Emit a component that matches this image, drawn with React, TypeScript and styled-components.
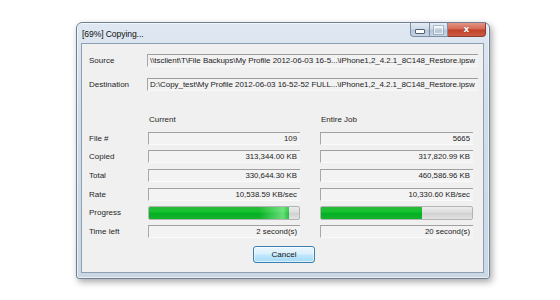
import React from "react";
import styled, { createGlobalStyle } from "styled-components";

const Global = createGlobalStyle`
  html, body { margin: 0; padding: 0; background: #ffffff; }
  body { font-family: "Liberation Sans", Arial, sans-serif; }
  #root { width: 560px; height: 300px; overflow: hidden; }
`;

const Page = styled.div`
  width: 560px;
  height: 300px;
  padding: 22px 0 0 76px;
  box-sizing: border-box;
`;

const Window = styled.div`
  width: 414px;
  height: 257px;
  box-sizing: border-box;
  border: 1px solid #6f8095;
  border-radius: 6px 6px 3px 3px;
  background: linear-gradient(180deg, #dfe8f2 0%, #d2deea 30%, #cbd7e4 100%);
  box-shadow: 2px 3px 7px rgba(0, 0, 0, 0.35), inset 0 0 0 1px rgba(255, 255, 255, 0.6);
  display: flex;
  flex-direction: column;
  padding: 0 5px 5px 4px;
`;

const TitleBar = styled.div`
  height: 20px;
  display: flex;
  align-items: flex-start;
`;

const Title = styled.div`
  font-size: 8.6px;
  color: #101010;
  padding: 6px 0 0 1px;
  letter-spacing: -0.1px;
`;

const Buttons = styled.div`
  margin-left: auto;
  display: flex;
  margin-top: 0px;
  margin-right: -2px;
`;

const CapBtn = styled.div<{ $w: number; $close?: boolean; $first?: boolean; $last?: boolean }>`
  width: ${(p) => p.$w}px;
  height: 14px;
  box-sizing: border-box;
  border: 1px solid ${(p) => (p.$close ? "#8b3b32" : "#7d8ea3")};
  border-left-width: ${(p) => (p.$first ? 1 : 0)}px;
  border-top: none;
  border-radius: ${(p) => (p.$first ? "0 0 0 4px" : p.$last ? "0 0 4px 0" : "0")};
  background: ${(p) =>
    p.$close
      ? "linear-gradient(180deg, #e39484 0%, #d46a55 45%, #c1402a 55%, #cc5c42 100%)"
      : "linear-gradient(180deg, #e4ecf5 0%, #cfdbe8 45%, #b6c6d8 55%, #c8d6e6 100%)"};
  display: flex;
  align-items: center;
  justify-content: center;
`;

const MinGlyph = styled.div`
  width: 8px;
  height: 3px;
  margin-top: 3px;
  background: #ffffff;
  border: 1px solid #4f6277;
  border-radius: 1px;
`;

const MaxGlyph = styled.div`
  width: 7px;
  height: 5px;
  border: 1px solid #ffffff;
  border-top-width: 2px;
  box-shadow: 0 0 0 1px rgba(79, 98, 119, 0.45);
  opacity: 0.7;
`;

const CloseGlyph = styled.div`
  color: #ffffff;
  font-family: "DejaVu Sans", sans-serif;
  font-weight: bold;
  font-size: 9px;
  line-height: 9px;
  text-shadow: 0 0 1px #6a2018;
`;

const Client = styled.div`
  flex: 1;
  background: #f0f0f0;
  border: 1px solid #8e9fb2;
  display: flex;
  flex-direction: column;
  padding: 9px 7px 9px 7px;
  box-sizing: border-box;
  font-size: 8px;
  color: #222;
`;

const PathRow = styled.div`
  display: grid;
  grid-template-columns: 58px 331px;
  align-items: center;
  height: 14px;
  margin-bottom: 10px;
`;

const Label = styled.div`
  font-size: 8px;
  color: #262626;
  white-space: nowrap;
`;

const PathField = styled.div`
  height: 13px;
  box-sizing: border-box;
  border-top: 1px solid #9d9d9d;
  border-left: 1px solid #a6a6a6;
  border-bottom: 1px solid #f8f8f8;
  background: #f2f2f2;
  font-size: 8px;
  letter-spacing: -0.05px;
  line-height: 11px;
  padding-left: 2px;
  white-space: nowrap;
  overflow: hidden;
  color: #1c1c1c;
`;

const Grid = styled.div`
  margin-top: 9px;
  display: grid;
  grid-template-columns: 59px 152px 20px 153px;
  grid-auto-rows: 18.7px;
  align-items: center;
`;

const Head = styled.div<{ $col: number }>`
  grid-column: ${(p) => p.$col};
  font-size: 8px;
  color: #262626;
  padding-left: 1px;
`;

const Field = styled.div<{ $col: number }>`
  grid-column: ${(p) => p.$col};
  height: 13px;
  box-sizing: border-box;
  border-top: 1px solid #a0a0a0;
  border-left: 1px solid #a8a8a8;
  border-bottom: 1px solid #fafafa;
  background: #f3f3f3;
  font-size: 7.8px;
  line-height: 11px;
  text-align: right;
  padding-right: 3px;
  color: #1c1c1c;
  white-space: nowrap;
`;

const Bar = styled.div<{ $col: number }>`
  grid-column: ${(p) => p.$col};
  height: 14px;
  box-sizing: border-box;
  border: 1px solid #b4b4b4;
  border-radius: 2px;
  background: linear-gradient(180deg, #ececec 0%, #dadada 50%, #d0d0d0 51%, #e2e2e2 100%);
  overflow: hidden;
  position: relative;
`;

const Fill = styled.div<{ $glow?: boolean }>`
  height: 100%;
  background: linear-gradient(180deg, #2bb83b 0%, #16c32f 35%, #06b025 55%, #15b32c 100%);
  position: relative;
  &::after {
    content: "";
    display: ${(p) => (p.$glow ? "block" : "none")};
    position: absolute;
    top: 0;
    bottom: 0;
    right: 0;
    width: 30px;
    background: linear-gradient(90deg, rgba(180, 255, 190, 0) 0%, rgba(180, 255, 190, 0.55) 80%, rgba(150, 240, 160, 0.2) 100%);
  }
`;

const Footer = styled.div`
  margin-top: auto;
  display: flex;
  justify-content: center;
`;

const CancelButton = styled.button`
  width: 62px;
  height: 17px;
  box-sizing: border-box;
  border: 1px solid #3c7fb1;
  border-radius: 3px;
  background: linear-gradient(180deg, #eaf6fd 0%, #d9f0fc 45%, #bee6fd 55%, #a7d9f5 100%);
  box-shadow: inset 0 0 0 1px rgba(255, 255, 255, 0.6);
  font-family: "Liberation Sans", Arial, sans-serif;
  font-size: 8px;
  color: #111;
  padding: 0;
  margin-left: 3px;
`;

type Row = { label: string; current: string; job: string };

const rows: Row[] = [
  { label: "File #", current: "109", job: "5665" },
  { label: "Copied", current: "313,344.00 KB", job: "317,820.99 KB" },
  { label: "Total", current: "330,644.30 KB", job: "460,586.96 KB" },
  { label: "Rate", current: "10,538.59 KB/sec", job: "10,330.60 KB/sec" },
];

export default function App() {
  return (
    <Page>
      <Global />
      <Window>
        <TitleBar>
          <Title>[69%] Copying...</Title>
          <Buttons>
            <CapBtn $w={20} $first>
              <MinGlyph />
            </CapBtn>
            <CapBtn $w={18}>
              <MaxGlyph />
            </CapBtn>
            <CapBtn $w={38} $close $last>
              <CloseGlyph>x</CloseGlyph>
            </CapBtn>
          </Buttons>
        </TitleBar>
        <Client>
          <PathRow>
            <Label>Source</Label>
            <PathField>\\tsclient\T\File Backups\My Profile 2012-06-03 16-5...\iPhone1,2_4.2.1_8C148_Restore.ipsw</PathField>
          </PathRow>
          <PathRow>
            <Label>Destination</Label>
            <PathField>D:\Copy_test\My Profile 2012-06-03 16-52-52 FULL...\iPhone1,2_4.2.1_8C148_Restore.ipsw</PathField>
          </PathRow>
          <Grid>
            <Head $col={2}>Current</Head>
            <Head $col={4}>Entire Job</Head>
            {rows.map((r) => (
              <React.Fragment key={r.label}>
                <Label>{r.label}</Label>
                <Field $col={2}>{r.current}</Field>
                <Field $col={4}>{r.job}</Field>
              </React.Fragment>
            ))}
            <Label>Progress</Label>
            <Bar $col={2}>
              <Fill $glow style={{ width: "93%" }} />
            </Bar>
            <Bar $col={4}>
              <Fill style={{ width: "67%" }} />
            </Bar>
            <Label>Time left</Label>
            <Field $col={2}>2 second(s)</Field>
            <Field $col={4}>20 second(s)</Field>
          </Grid>
          <Footer>
            <CancelButton>Cancel</CancelButton>
          </Footer>
        </Client>
      </Window>
    </Page>
  );
}
